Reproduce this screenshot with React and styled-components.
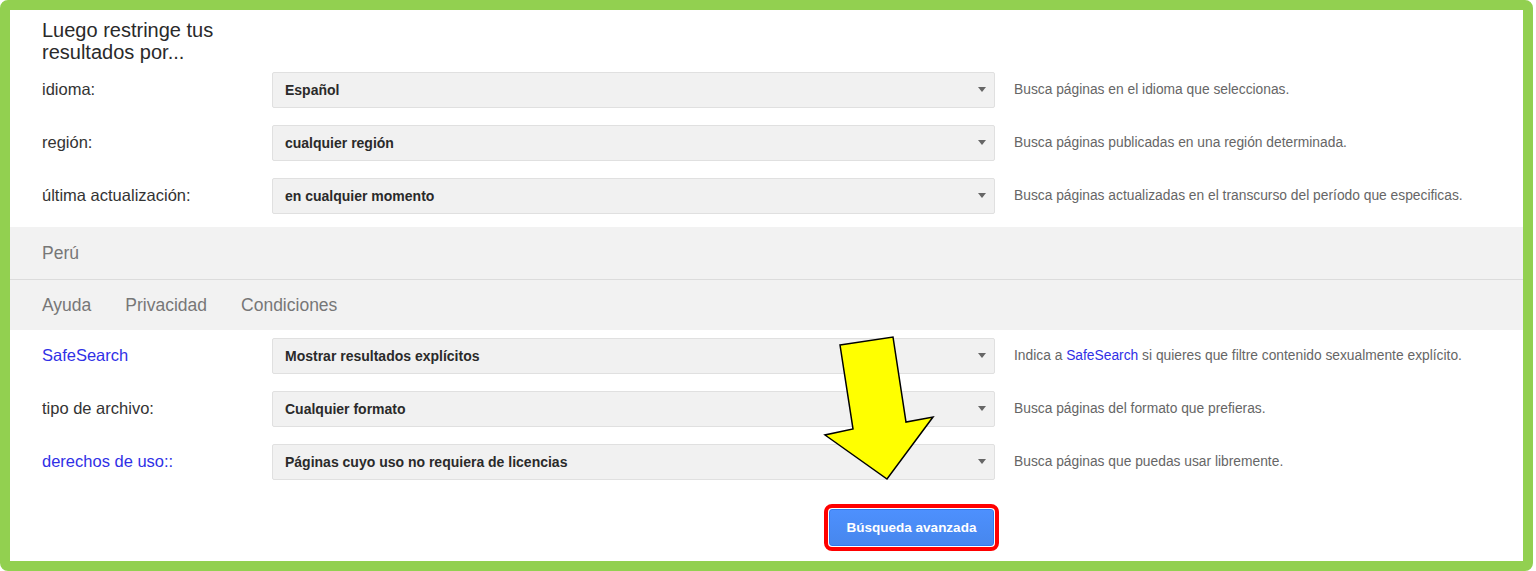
import React from "react";
import styled, { createGlobalStyle } from "styled-components";

const GlobalStyle = createGlobalStyle`
  html, body {
    margin: 0;
    padding: 0;
    background: #ffffff;
    font-family: Arial, "Liberation Sans", sans-serif;
  }
`;

const Page = styled.div`
  position: relative;
  width: 1533px;
  height: 571px;
`;

const Frame = styled.div`
  box-sizing: border-box;
  width: 100%;
  height: 100%;
  border: 10px solid #92d050;
  border-radius: 8px;
  background: #fff;
  display: flex;
  flex-direction: column;
  overflow: hidden;
`;

const Section = styled.div`
  padding-left: 32px;
  margin-top: ${(p) => p.$shift || 0}px;
`;

const Heading = styled.h2`
  margin: 0;
  padding-top: 9px;
  font-size: 20px;
  line-height: 22px;
  font-weight: normal;
  color: #2a2a2a;
  width: 220px;
`;

// label | select | hint
const Row = styled.div`
  display: grid;
  grid-template-columns: 211px 723px 1fr;
  column-gap: 19px;
  align-items: center;
  height: 53px;
`;

const Label = styled.div`
  font-size: 16.5px;
  color: ${(p) => (p.$link ? "#3030e6" : "#333")};
`;

const Select = styled.div`
  box-sizing: border-box;
  height: 36px;
  display: flex;
  align-items: center;
  justify-content: space-between;
  padding: 0 8px 0 12px;
  background: #f1f1f1;
  border: 1px solid #e0e0e0;
  border-radius: 2px;
  font-size: 14px;
  font-weight: bold;
  color: #2a2a2a;
`;

const Caret = styled.span`
  width: 0;
  height: 0;
  border-left: 4.5px solid transparent;
  border-right: 4.5px solid transparent;
  border-top: 5px solid #666;
`;

const Hint = styled.div`
  font-size: 13.8px;
  color: #666;
  white-space: nowrap;
`;

const Link = styled.span`
  color: #3030e6;
`;

const GrayBand = styled.div`
  background: #f2f2f2;
  margin-top: 5px;
`;

const BandRow = styled.div`
  display: flex;
  align-items: center;
  gap: 34px;
  padding-left: 32px;
  height: ${(p) => p.$h}px;
  font-size: 17.5px;
  color: #777;
  border-bottom: ${(p) => (p.$line ? "1px solid #dcdcdc" : "none")};
`;

const ButtonRow = styled.div`
  display: grid;
  grid-template-columns: 211px 723px 1fr;
  column-gap: 19px;
  margin-top: 16px;
`;

const RedRing = styled.div`
  grid-column: 2;
  justify-self: end;
  margin-right: -4px;
  border: 4px solid #ff0000;
  border-radius: 8px;
  padding: 1px;
  display: flex;
`;

const SearchButton = styled.div`
  box-sizing: border-box;
  width: 165px;
  height: 37px;
  display: flex;
  align-items: center;
  justify-content: center;
  background: linear-gradient(#4d90fe, #4787ed);
  border: 1px solid #3079ed;
  border-radius: 3px;
  color: #fff;
  font-size: 13.5px;
  font-weight: bold;
`;

const Pointer = styled.svg`
  position: absolute;
  left: 820px;
  top: 330px;
  width: 120px;
  height: 155px;
  overflow: visible;
`;

const topRows = [
  { label: "idioma:", value: "Español", hint: "Busca páginas en el idioma que seleccionas." },
  { label: "región:", value: "cualquier región", hint: "Busca páginas publicadas en una región determinada." },
  {
    label: "última actualización:",
    value: "en cualquier momento",
    hint: "Busca páginas actualizadas en el transcurso del período que especificas.",
  },
];

const FieldRow = ({ label, value, hint, link }) => (
  <Row>
    <Label $link={link}>{label}</Label>
    <Select>
      <span>{value}</span>
      <Caret />
    </Select>
    <Hint>{hint}</Hint>
  </Row>
);

const App = () => {
  return (
    <Page>
      <GlobalStyle />
      <Frame>
        <Section>
          <Heading>Luego restringe tus resultados por...</Heading>
          {topRows.map((r) => (
            <FieldRow key={r.label} {...r} />
          ))}
        </Section>

        <GrayBand>
          <BandRow $h={52} $line>Perú</BandRow>
          <BandRow $h={50}>
            <span>Ayuda</span>
            <span>Privacidad</span>
            <span>Condiciones</span>
          </BandRow>
        </GrayBand>

        <Section $shift={-1}>
          <FieldRow
            link
            label="SafeSearch"
            value="Mostrar resultados explícitos"
            hint={
              <>
                Indica a <Link>SafeSearch</Link> si quieres que filtre contenido sexualmente explícito.
              </>
            }
          />
          <FieldRow
            label="tipo de archivo:"
            value="Cualquier formato"
            hint="Busca páginas del formato que prefieras."
          />
          <FieldRow
            link
            label="derechos de uso::"
            value="Páginas cuyo uso no requiera de licencias"
            hint="Busca páginas que puedas usar libremente."
          />
          <ButtonRow>
            <RedRing>
              <SearchButton>Búsqueda avanzada</SearchButton>
            </RedRing>
          </ButtonRow>
        </Section>
      </Frame>

      {/* flecha amarilla encima del botón */}
      <Pointer viewBox="0 0 120 155">
        <polygon
          points="20,15 73,7 86,92 113,87 67,149 5,105 33,99"
          fill="#ffff00"
          stroke="#000"
          strokeWidth="1.5"
          strokeLinejoin="miter"
        />
      </Pointer>
    </Page>
  );
};

export default App;
